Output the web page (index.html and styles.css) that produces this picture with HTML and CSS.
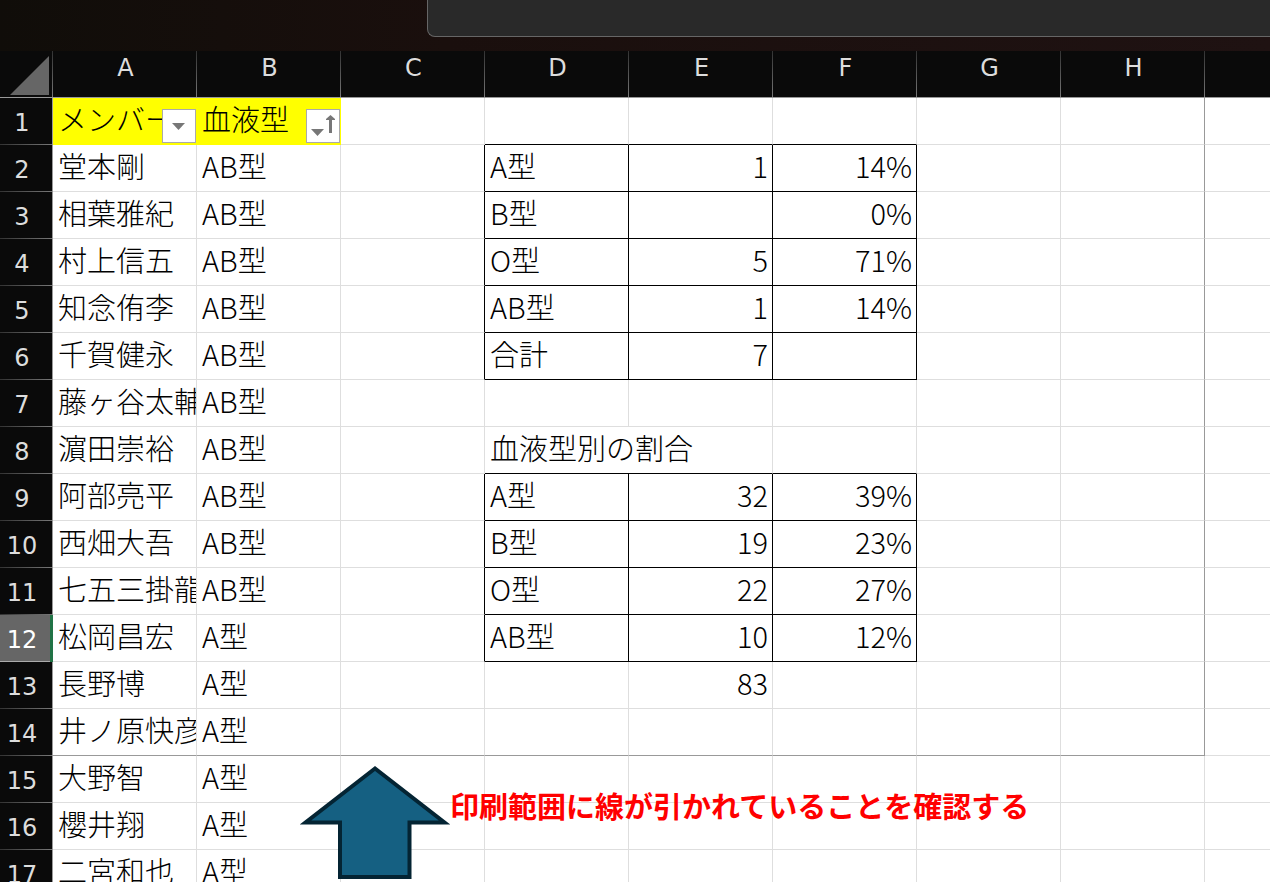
FILE: index.html
```html
<!DOCTYPE html>
<html lang="ja">
<head>
  <meta charset="UTF-8">
  <title>血液型別の割合</title>
  <link rel="stylesheet" href="styles.css">
</head>
<body>
  <div class="topbar">
    <div class="formula-bar"></div>
  </div>

  <div class="sheet">
    <table>
      <colgroup>
        <col class="col-num">
        <col class="col"><col class="col"><col class="col"><col class="col">
        <col class="col"><col class="col"><col class="col"><col class="col">
        <col>
      </colgroup>
      <thead>
        <tr>
          <th class="corner">
            <svg width="40" height="40" viewBox="0 0 40 40"><path d="M39 0V39H0Z" fill="#666"/></svg>
          </th>
          <th>A</th><th>B</th><th>C</th><th>D</th><th>E</th><th>F</th><th>G</th><th>H</th><th></th>
        </tr>
      </thead>
      <tbody>
        <tr>
          <th>1</th>
          <td class="title">メンバー
            <button class="filter" aria-label="メンバー">
              <svg width="32" height="32" viewBox="0 0 32 32"><path d="M9 13H22L15.500 20Z" fill="#777"/></svg>
            </button>
          </td>
          <td class="title">血液型
            <button class="filter" aria-label="血液型">
              <svg width="32" height="32" viewBox="0 0 32 32"><path d="M4 19H17L10.500 26ZM22 23V10H19V9L23.500 5L28 9V10H25V23Z" fill="#777"/></svg>
            </button>
          </td>
          <td></td><td class="line-bottom"></td><td class="line-bottom"></td><td class="line-bottom"></td><td></td><td class="print-right"></td><td></td>
        </tr>
        <tr>
          <th>2</th><td>堂本剛</td><td>AB型</td><td class="line-right"></td>
          <td class="box">A型</td><td class="box num">1</td><td class="box num">14%</td>
          <td></td><td class="print-right"></td><td></td>
        </tr>
        <tr>
          <th>3</th><td>相葉雅紀</td><td>AB型</td><td class="line-right"></td>
          <td class="box">B型</td><td class="box num"></td><td class="box num">0%</td>
          <td></td><td class="print-right"></td><td></td>
        </tr>
        <tr>
          <th>4</th><td>村上信五</td><td>AB型</td><td class="line-right"></td>
          <td class="box">O型</td><td class="box num">5</td><td class="box num">71%</td>
          <td></td><td class="print-right"></td><td></td>
        </tr>
        <tr>
          <th>5</th><td>知念侑李</td><td>AB型</td><td class="line-right"></td>
          <td class="box">AB型</td><td class="box num">1</td><td class="box num">14%</td>
          <td></td><td class="print-right"></td><td></td>
        </tr>
        <tr>
          <th>6</th><td>千賀健永</td><td>AB型</td><td class="line-right"></td>
          <td class="box">合計</td><td class="box num">7</td><td class="box num"></td>
          <td></td><td class="print-right"></td><td></td>
        </tr>
        <tr>
          <th>7</th><td>藤ヶ谷太輔</td><td>AB型</td><td></td>
          <td></td><td></td><td></td>
          <td></td><td class="print-right"></td><td></td>
        </tr>
        <tr>
          <th>8</th><td>濵田崇裕</td><td>AB型</td><td></td>
          <td class="line-bottom" colspan="2">血液型別の割合</td><td class="line-bottom"></td>
          <td></td><td class="print-right"></td><td></td>
        </tr>
        <tr>
          <th>9</th><td>阿部亮平</td><td>AB型</td><td class="line-right"></td>
          <td class="box">A型</td><td class="box num">32</td><td class="box num">39%</td>
          <td></td><td class="print-right"></td><td></td>
        </tr>
        <tr>
          <th>10</th><td>西畑大吾</td><td>AB型</td><td class="line-right"></td>
          <td class="box">B型</td><td class="box num">19</td><td class="box num">23%</td>
          <td></td><td class="print-right"></td><td></td>
        </tr>
        <tr>
          <th>11</th><td>七五三掛龍</td><td>AB型</td><td class="line-right"></td>
          <td class="box">O型</td><td class="box num">22</td><td class="box num">27%</td>
          <td></td><td class="print-right"></td><td></td>
        </tr>
        <tr class="selected">
          <th>12</th><td>松岡昌宏</td><td>A型</td><td class="line-right"></td>
          <td class="box">AB型</td><td class="box num">10</td><td class="box num">12%</td>
          <td></td><td class="print-right"></td><td></td>
        </tr>
        <tr>
          <th>13</th><td>長野博</td><td>A型</td><td></td>
          <td></td><td class="num">83</td><td></td>
          <td></td><td class="print-right"></td><td></td>
        </tr>
        <tr class="print-end">
          <th>14</th><td>井ノ原快彦</td><td>A型</td><td></td>
          <td></td><td></td><td></td>
          <td></td><td class="print-right"></td><td></td>
        </tr>
        <tr>
          <th>15</th><td>大野智</td><td>A型</td><td></td><td></td><td></td><td></td><td></td><td></td><td></td>
        </tr>
        <tr>
          <th>16</th><td>櫻井翔</td><td>A型</td><td></td><td></td><td></td><td></td><td></td><td></td><td></td>
        </tr>
        <tr>
          <th>17</th><td>二宮和也</td><td>A型</td><td></td><td></td><td></td><td></td><td></td><td></td><td></td>
        </tr>
      </tbody>
    </table>

    <!-- shapes placed on the sheet -->
    <svg class="arrow" width="150" height="114" viewBox="0 0 150 114">
      <path d="M75 3.500L5.500 57.500H40V112H109.500V57.500H144.500Z" fill="#156082" stroke="#042433" stroke-width="4" stroke-miterlimit="10"/>
    </svg>
    <p class="note">印刷範囲に線が引かれていることを確認する</p>
  </div>
</body>
</html>
```
FILE: styles.css
```css
body {
  margin: 0;
  padding-bottom: 10px;
  box-sizing: border-box;
  height: 100vh;
  display: flex;
  flex-direction: column;
  overflow: hidden;
  background-color: #fff;
  font-family: "Noto Sans CJK JP", sans-serif;
}

.topbar {
  flex: none;
  padding: 0 0 14px 427px;
  background: linear-gradient(to right, #100d09, #1a0f0d 35%, #1f1212);
}

.formula-bar {
  height: 36px;
  background-color: #292929;
  border-left: 1px solid #666;
  border-bottom: 1px solid #666;
  border-bottom-left-radius: 8px;
}

.sheet {
  position: relative;
  flex: 1;
  min-height: 0;
  overflow: hidden;
}

table {
  width: 100%;
  table-layout: fixed;
  border-collapse: separate;
  border-spacing: 0;
}

.col-num {
  width: 53px;
}

.col {
  width: 144px;
}

th,
td {
  box-sizing: border-box;
  height: 47px;
  padding: 0 4px 0 5px;
  overflow: hidden;
  white-space: nowrap;
}

th {
  background-color: #0a0a0a;
  color: #ddd;
  font-family: "DejaVu Sans", sans-serif;
  font-size: 24px;
  font-weight: normal;
  line-height: 28px;
}

thead th {
  padding-bottom: 12px;
  border-bottom: 1px solid #999;
  background-image: linear-gradient(#333, #777);
  background-size: 1px 100%;
  background-position: right;
  background-repeat: no-repeat;
}

thead th:last-child {
  background-image: none;
}

thead .corner {
  padding: 4px 3px 0 0;
  text-align: right;
}

.corner svg {
  display: block;
  margin-left: auto;
}

tbody th {
  padding: 3px 8px 0 0;
  border-right: 1px solid #999;
  background-image: linear-gradient(to right, #333, #777);
  background-size: 100% 1px;
  background-position: bottom;
  background-repeat: no-repeat;
}

.selected th {
  padding-right: 6px;
  background-color: #666;
  background-image: linear-gradient(#aaa, #aaa);
  border-right: 3px solid #217346;
  color: #fff;
}

td {
  padding-bottom: 6px;
  border-right: 1px solid #dedede;
  border-bottom: 1px solid #dedede;
  color: #000;
  font-size: 29px;
  font-weight: 300;
  line-height: 40px;
}

td:last-child {
  border-right: none;
}

.num {
  text-align: right;
}

.title {
  position: relative;
  background-color: #ff0;
  border-color: #ff0;
}

.box {
  border-color: #000;
}

.line-right {
  border-right-color: #000;
}

.line-bottom {
  border-bottom-color: #000;
}

.print-right {
  border-right-color: #999;
}

.print-end td:not(:last-child) {
  border-bottom-color: #999;
}

.filter {
  position: absolute;
  right: 0;
  bottom: 1px;
  width: 34px;
  height: 34px;
  padding: 0;
  border: 1px solid #aaa;
  background-color: #fff;
}

.filter svg {
  display: block;
}

.arrow {
  position: absolute;
  left: 300px;
  top: 714px;
}

.note {
  position: absolute;
  left: 450px;
  top: 734px;
  margin: 0;
  color: #f00;
  font-size: 29px;
  font-weight: bold;
  line-height: 40px;
  white-space: nowrap;
}
```
